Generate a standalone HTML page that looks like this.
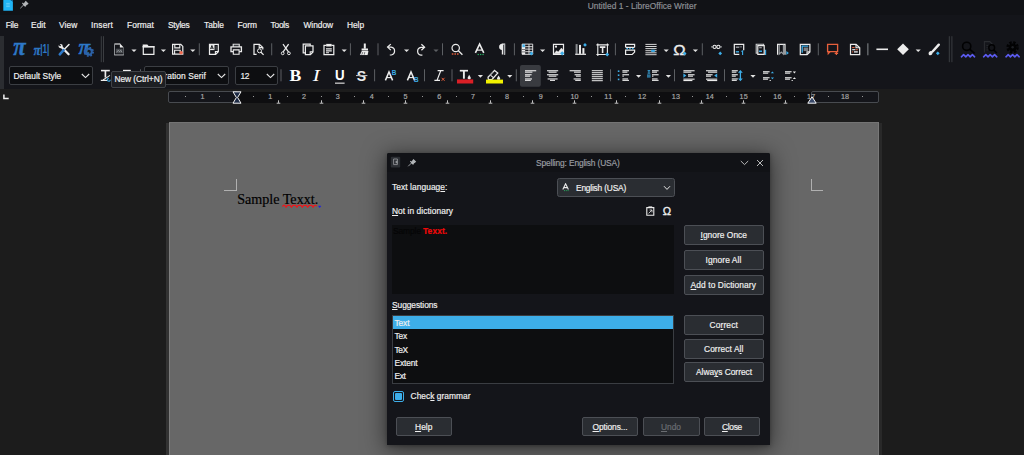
<!DOCTYPE html>
<html lang="en"><head><meta charset="utf-8"><title>Untitled 1 - LibreOffice Writer</title>
<style>
html,body{margin:0;padding:0;background:#1c1c1c;}
#root{position:relative;width:1024px;height:455px;overflow:hidden;background:#1c1c1c;font-family:"Liberation Sans",sans-serif;font-size:8.4px;color:#f2f2f2;}
.a{position:absolute;display:block;}
.t{position:absolute;white-space:pre;line-height:14px;height:14px;-webkit-text-stroke:0.18px currentColor;}
u{text-decoration:underline;text-decoration-thickness:1px;text-underline-offset:1px;}

</style></head>
<body>
<div id="root">
<div class="a" style="left:0px;top:0px;width:1024px;height:15px;background:#111216;"></div><div class="a" style="left:0px;top:15px;width:1024px;height:74px;background:#14151a;"></div><span class="t" style="left:587.70px;top:-1.41px;font-family:'Liberation Sans',sans-serif;font-size:8.4px;color:#8d9095;letter-spacing:0.036px;">Untitled 1 - LibreOffice Writer</span><svg class="a" style="left:0;top:0" width="32" height="12" viewBox="0 0 32 12"><path d="M3.3 0h7.2l2.4 1.6v9.2h-9.6z" fill="#1fb4f6"/><path d="M10.6 0l2.3 1.7v-1.7z" fill="#0e6fa8"/><path d="M6.2 3.4h3.6M6.2 5h3.6M6.2 6.6h3.6" stroke="#6fd0fa" stroke-width="0.8"/><path d="M20.6 8l3-3" stroke="#9a9da1" stroke-width="1" stroke-linecap="round"/><path d="M22.4 3l3.4 3.4M23.6 4.6l2.2-3l2 2l-3 2.2z" stroke="#b4b7ba" stroke-width="1.1" fill="#b4b7ba"/></svg><span class="t" style="left:5.80px;top:17.59px;font-family:'Liberation Sans',sans-serif;font-size:8.4px;color:#f0f0f0;letter-spacing:-0.325px;">File</span><span class="t" style="left:31.00px;top:17.59px;font-family:'Liberation Sans',sans-serif;font-size:8.4px;color:#f0f0f0;letter-spacing:0.041px;">Edit</span><span class="t" style="left:59.00px;top:17.59px;font-family:'Liberation Sans',sans-serif;font-size:8.4px;color:#f0f0f0;letter-spacing:0.121px;">View</span><span class="t" style="left:91.00px;top:17.59px;font-family:'Liberation Sans',sans-serif;font-size:8.4px;color:#f0f0f0;letter-spacing:0.174px;">Insert</span><span class="t" style="left:127.00px;top:17.59px;font-family:'Liberation Sans',sans-serif;font-size:8.4px;color:#f0f0f0;letter-spacing:0.078px;">Format</span><span class="t" style="left:168.00px;top:17.59px;font-family:'Liberation Sans',sans-serif;font-size:8.4px;color:#f0f0f0;letter-spacing:-0.219px;">Styles</span><span class="t" style="left:204.00px;top:17.59px;font-family:'Liberation Sans',sans-serif;font-size:8.4px;color:#f0f0f0;letter-spacing:-0.006px;">Table</span><span class="t" style="left:237.50px;top:17.59px;font-family:'Liberation Sans',sans-serif;font-size:8.4px;color:#f0f0f0;letter-spacing:-0.012px;">Form</span><span class="t" style="left:270.50px;top:17.59px;font-family:'Liberation Sans',sans-serif;font-size:8.4px;color:#f0f0f0;letter-spacing:-0.212px;">Tools</span><span class="t" style="left:303.50px;top:17.59px;font-family:'Liberation Sans',sans-serif;font-size:8.4px;color:#f0f0f0;letter-spacing:-0.049px;">Window</span><span class="t" style="left:347.00px;top:17.59px;font-family:'Liberation Sans',sans-serif;font-size:8.4px;color:#f0f0f0;letter-spacing:-0.059px;">Help</span><div class="a" style="left:0px;top:36.4px;width:3.6px;height:52.6px;background:#2b2d31;"></div><div class="a" style="left:8.7px;top:66.2px;width:84.6px;height:18.5px;background:#0d0e11;border:1px solid #3b3e43;box-sizing:border-box;border-radius:2px;"></div><span class="t" style="left:13.50px;top:68.59px;font-family:'Liberation Sans',sans-serif;font-size:8.4px;color:#f0f0f0;letter-spacing:0.024px;">Default Style</span><svg class="a" style="left:81.20px;top:73.05px;" width="9" height="6" viewBox="0 0 9 6"><path d="M0.8 1 L4.5 4.6 L8.2 1" fill="none" stroke="#e8e8e8" stroke-width="1.1"/></svg><div class="a" style="left:144px;top:66.2px;width:85px;height:18.5px;background:#0d0e11;border:1px solid #3b3e43;box-sizing:border-box;border-radius:2px;"></div><span class="t" style="left:148.00px;top:68.59px;font-family:'Liberation Sans',sans-serif;font-size:8.4px;color:#f0f0f0;letter-spacing:0.104px;">Liberation Serif</span><svg class="a" style="left:216.90px;top:73.05px;" width="9" height="6" viewBox="0 0 9 6"><path d="M0.8 1 L4.5 4.6 L8.2 1" fill="none" stroke="#e8e8e8" stroke-width="1.1"/></svg><div class="a" style="left:235.3px;top:66.2px;width:42.4px;height:18.5px;background:#0d0e11;border:1px solid #3b3e43;box-sizing:border-box;border-radius:2px;"></div><span class="t" style="left:240.50px;top:68.59px;font-family:'Liberation Sans',sans-serif;font-size:8.4px;color:#f0f0f0;letter-spacing:-0.414px;">12</span><svg class="a" style="left:265.60px;top:73.05px;" width="9" height="6" viewBox="0 0 9 6"><path d="M0.8 1 L4.5 4.6 L8.2 1" fill="none" stroke="#e8e8e8" stroke-width="1.1"/></svg><div class="a" style="left:0px;top:89px;width:1024px;height:366px;background:#1c1c1c;"></div><div class="a" style="left:165.6px;top:122.6px;width:3.4px;height:333px;background:#323232;"></div><div class="a" style="left:168.8px;top:122.2px;width:710.4px;height:333px;background:#676767;"></div><div class="a" style="left:168.8px;top:122.2px;width:1px;height:333px;background:#7e7e7e;"></div><div class="a" style="left:168.8px;top:122.2px;width:710.4px;height:1px;background:#747474;"></div><div class="a" style="left:878.2px;top:122.2px;width:1px;height:333px;background:#787878;"></div><div class="a" style="left:879.2px;top:122.8px;width:2.8px;height:333px;background:#292929;"></div><div class="a" style="left:224px;top:189.5px;width:13px;height:1px;background:#b0b0b0;"></div><div class="a" style="left:235.7px;top:179px;width:1px;height:11.5px;background:#b0b0b0;"></div><div class="a" style="left:810.5px;top:189.5px;width:12.5px;height:1px;background:#b0b0b0;"></div><div class="a" style="left:810.5px;top:179px;width:1px;height:11.5px;background:#b0b0b0;"></div><span class="t" style="left:237.20px;top:192.04px;font-family:'Liberation Serif',serif;font-size:14.1px;color:#000;letter-spacing:0.002px;">Sample Texxt.</span><svg class="a" style="left:282px;top:203.5px" width="42" height="6" viewBox="0 0 42 6"><path d="M0.4 2.6 l1 -1.2 l1.4 0 l1.3 1.9 l1.3 -1.9 l1.4 0 l1.4 0 l1.3 1.9 l1.3 -1.9 l1.4 0 l1.4 0 l1.3 1.9 l1.3 -1.9 l1.4 0 l1.4 0 l1.3 1.9 l1.3 -1.9 l1.4 0 l1.4 0 l1.3 1.9 l1.3 -1.9 l1.4 0 l1.4 0 l1.3 1.9 l1.3 -1.9 l1.4 0 l1 0.6" fill="none" stroke="#f0161a" stroke-width="1.15" stroke-linejoin="round"/><path d="M36.4 2 h2.6 l-1.3 1.7 z" fill="#2222e0" stroke="#2222e0" stroke-width="0.4"/></svg><div class="a" style="left:236px;top:91.5px;width:577px;height:11.4px;background:#0e0e10;"></div><div class="a" style="left:168px;top:91.4px;width:70px;height:11.5px;background:#14151a;border:1px solid #484b50;box-sizing:border-box;border-radius:2px;"></div><div class="a" style="left:811px;top:91.4px;width:67.6px;height:11.5px;background:#14151a;border:1px solid #484b50;box-sizing:border-box;border-radius:2px;"></div><div class="a" style="left:185px;top:95.5px;width:1px;height:1.6px;background:#9a9a9a;"></div><span class="t" style="left:200.59px;top:89.81px;font-family:'Liberation Sans',sans-serif;font-size:7.2px;color:#a8a8a8;letter-spacing:0.200px;">1</span><div class="a" style="left:219px;top:95.5px;width:1px;height:1.6px;background:#9a9a9a;"></div><div class="a" style="left:253px;top:95.5px;width:1px;height:1.6px;background:#9a9a9a;"></div><span class="t" style="left:268.21px;top:89.81px;font-family:'Liberation Sans',sans-serif;font-size:7.2px;color:#a8a8a8;letter-spacing:0.200px;">1</span><div class="a" style="left:287px;top:95.5px;width:1px;height:1.6px;background:#9a9a9a;"></div><span class="t" style="left:302.02px;top:89.81px;font-family:'Liberation Sans',sans-serif;font-size:7.2px;color:#a8a8a8;letter-spacing:0.200px;">2</span><div class="a" style="left:321px;top:95.5px;width:1px;height:1.6px;background:#9a9a9a;"></div><span class="t" style="left:335.84px;top:89.81px;font-family:'Liberation Sans',sans-serif;font-size:7.2px;color:#a8a8a8;letter-spacing:0.200px;">3</span><div class="a" style="left:354px;top:95.5px;width:1px;height:1.6px;background:#9a9a9a;"></div><span class="t" style="left:369.65px;top:89.81px;font-family:'Liberation Sans',sans-serif;font-size:7.2px;color:#a8a8a8;letter-spacing:0.200px;">4</span><div class="a" style="left:388px;top:95.5px;width:1px;height:1.6px;background:#9a9a9a;"></div><span class="t" style="left:403.46px;top:89.81px;font-family:'Liberation Sans',sans-serif;font-size:7.2px;color:#a8a8a8;letter-spacing:0.200px;">5</span><div class="a" style="left:422px;top:95.5px;width:1px;height:1.6px;background:#9a9a9a;"></div><span class="t" style="left:437.27px;top:89.81px;font-family:'Liberation Sans',sans-serif;font-size:7.2px;color:#a8a8a8;letter-spacing:0.200px;">6</span><div class="a" style="left:456px;top:95.5px;width:1px;height:1.6px;background:#9a9a9a;"></div><span class="t" style="left:471.08px;top:89.81px;font-family:'Liberation Sans',sans-serif;font-size:7.2px;color:#a8a8a8;letter-spacing:0.200px;">7</span><div class="a" style="left:490px;top:95.5px;width:1px;height:1.6px;background:#9a9a9a;"></div><span class="t" style="left:504.89px;top:89.81px;font-family:'Liberation Sans',sans-serif;font-size:7.2px;color:#a8a8a8;letter-spacing:0.200px;">8</span><div class="a" style="left:523px;top:95.5px;width:1px;height:1.6px;background:#9a9a9a;"></div><span class="t" style="left:538.71px;top:89.81px;font-family:'Liberation Sans',sans-serif;font-size:7.2px;color:#a8a8a8;letter-spacing:0.200px;">9</span><div class="a" style="left:557px;top:95.5px;width:1px;height:1.6px;background:#9a9a9a;"></div><span class="t" style="left:570.42px;top:89.81px;font-family:'Liberation Sans',sans-serif;font-size:7.2px;color:#a8a8a8;letter-spacing:0.200px;">10</span><div class="a" style="left:591px;top:95.5px;width:1px;height:1.6px;background:#9a9a9a;"></div><span class="t" style="left:604.23px;top:89.81px;font-family:'Liberation Sans',sans-serif;font-size:7.2px;color:#a8a8a8;letter-spacing:0.466px;">11</span><div class="a" style="left:625px;top:95.5px;width:1px;height:1.6px;background:#9a9a9a;"></div><span class="t" style="left:638.04px;top:89.81px;font-family:'Liberation Sans',sans-serif;font-size:7.2px;color:#a8a8a8;letter-spacing:0.200px;">12</span><div class="a" style="left:659px;top:95.5px;width:1px;height:1.6px;background:#9a9a9a;"></div><span class="t" style="left:671.85px;top:89.81px;font-family:'Liberation Sans',sans-serif;font-size:7.2px;color:#a8a8a8;letter-spacing:0.200px;">13</span><div class="a" style="left:692px;top:95.5px;width:1px;height:1.6px;background:#9a9a9a;"></div><span class="t" style="left:705.66px;top:89.81px;font-family:'Liberation Sans',sans-serif;font-size:7.2px;color:#a8a8a8;letter-spacing:0.200px;">14</span><div class="a" style="left:726px;top:95.5px;width:1px;height:1.6px;background:#9a9a9a;"></div><span class="t" style="left:739.48px;top:89.81px;font-family:'Liberation Sans',sans-serif;font-size:7.2px;color:#a8a8a8;letter-spacing:0.200px;">15</span><div class="a" style="left:760px;top:95.5px;width:1px;height:1.6px;background:#9a9a9a;"></div><span class="t" style="left:773.29px;top:89.81px;font-family:'Liberation Sans',sans-serif;font-size:7.2px;color:#a8a8a8;letter-spacing:0.200px;">16</span><div class="a" style="left:794px;top:95.5px;width:1px;height:1.6px;background:#9a9a9a;"></div><span class="t" style="left:807.10px;top:89.81px;font-family:'Liberation Sans',sans-serif;font-size:7.2px;color:#a8a8a8;letter-spacing:0.200px;">17</span><div class="a" style="left:828px;top:95.5px;width:1px;height:1.6px;background:#9a9a9a;"></div><span class="t" style="left:840.91px;top:89.81px;font-family:'Liberation Sans',sans-serif;font-size:7.2px;color:#a8a8a8;letter-spacing:0.200px;">18</span><div class="a" style="left:862px;top:95.5px;width:1px;height:1.6px;background:#9a9a9a;"></div><svg class="a" style="left:276.26px;top:99.6px" width="5" height="4" viewBox="0 0 5 4"><path d="M2.5 0.3v2.6M0.7 3.2h3.6" stroke="#c4c4c4" stroke-width="1" fill="none"/></svg><svg class="a" style="left:318.53px;top:99.6px" width="5" height="4" viewBox="0 0 5 4"><path d="M2.5 0.3v2.6M0.7 3.2h3.6" stroke="#c4c4c4" stroke-width="1" fill="none"/></svg><svg class="a" style="left:360.79px;top:99.6px" width="5" height="4" viewBox="0 0 5 4"><path d="M2.5 0.3v2.6M0.7 3.2h3.6" stroke="#c4c4c4" stroke-width="1" fill="none"/></svg><svg class="a" style="left:403.06px;top:99.6px" width="5" height="4" viewBox="0 0 5 4"><path d="M2.5 0.3v2.6M0.7 3.2h3.6" stroke="#c4c4c4" stroke-width="1" fill="none"/></svg><svg class="a" style="left:445.32px;top:99.6px" width="5" height="4" viewBox="0 0 5 4"><path d="M2.5 0.3v2.6M0.7 3.2h3.6" stroke="#c4c4c4" stroke-width="1" fill="none"/></svg><svg class="a" style="left:487.59px;top:99.6px" width="5" height="4" viewBox="0 0 5 4"><path d="M2.5 0.3v2.6M0.7 3.2h3.6" stroke="#c4c4c4" stroke-width="1" fill="none"/></svg><svg class="a" style="left:529.85px;top:99.6px" width="5" height="4" viewBox="0 0 5 4"><path d="M2.5 0.3v2.6M0.7 3.2h3.6" stroke="#c4c4c4" stroke-width="1" fill="none"/></svg><svg class="a" style="left:572.12px;top:99.6px" width="5" height="4" viewBox="0 0 5 4"><path d="M2.5 0.3v2.6M0.7 3.2h3.6" stroke="#c4c4c4" stroke-width="1" fill="none"/></svg><svg class="a" style="left:614.38px;top:99.6px" width="5" height="4" viewBox="0 0 5 4"><path d="M2.5 0.3v2.6M0.7 3.2h3.6" stroke="#c4c4c4" stroke-width="1" fill="none"/></svg><svg class="a" style="left:656.65px;top:99.6px" width="5" height="4" viewBox="0 0 5 4"><path d="M2.5 0.3v2.6M0.7 3.2h3.6" stroke="#c4c4c4" stroke-width="1" fill="none"/></svg><svg class="a" style="left:698.91px;top:99.6px" width="5" height="4" viewBox="0 0 5 4"><path d="M2.5 0.3v2.6M0.7 3.2h3.6" stroke="#c4c4c4" stroke-width="1" fill="none"/></svg><svg class="a" style="left:741.18px;top:99.6px" width="5" height="4" viewBox="0 0 5 4"><path d="M2.5 0.3v2.6M0.7 3.2h3.6" stroke="#c4c4c4" stroke-width="1" fill="none"/></svg><svg class="a" style="left:783.44px;top:99.6px" width="5" height="4" viewBox="0 0 5 4"><path d="M2.5 0.3v2.6M0.7 3.2h3.6" stroke="#c4c4c4" stroke-width="1" fill="none"/></svg><svg class="a" style="left:231.50px;top:91px" width="10" height="13" viewBox="0 0 10 13"><path d="M1 0.8h8L5.6 6.5 9 12.2H1L4.4 6.5z" fill="#1d2a44" stroke="#f4f4f4" stroke-width="1" stroke-linejoin="round"/></svg><svg class="a" style="left:807.00px;top:96px" width="10" height="8" viewBox="0 0 10 8"><path d="M5 0.8 L9.2 7.2H0.8z" fill="#3a4a6a" stroke="#f4f4f4" stroke-width="1" stroke-linejoin="round"/></svg><svg class="a" style="left:3px;top:94px" width="7" height="6" viewBox="0 0 7 6"><path d="M0.9 0.4v4h4.8" stroke="#f0f0f0" stroke-width="1.5" fill="none"/></svg><svg class="a" style="left:0;top:0" width="1024" height="90" viewBox="0 0 1024 90"><text x="13.2" y="55.4" font-family="'Liberation Serif', serif" font-weight="bold" font-style="italic" font-size="24.5" fill="#2d78c8" stroke="#2d78c8" stroke-width="0.45" textLength="12.4" lengthAdjust="spacingAndGlyphs">π</text><text x="33.8" y="54.8" font-family="'Liberation Serif', serif" font-weight="bold" font-style="italic" font-size="15" fill="#2d78c8" stroke="#2d78c8" stroke-width="0.4" textLength="6.6" lengthAdjust="spacingAndGlyphs">π</text><text x="40.2" y="53.2" font-family="'Liberation Sans', sans-serif" font-weight="bold" font-size="12.6" fill="#2d78c8" textLength="9.2" lengthAdjust="spacingAndGlyphs">|1|</text><g transform="translate(58 43.5)" ><path d="M3 3L10.6 10.8" stroke="#ececec" stroke-width="2.24" fill="none" stroke-linecap="round"/><circle cx="2.6" cy="2.6" r="2.1" fill="#ececec" stroke="none" stroke-width="1"/><path d="M0 0L2.6 2.6" stroke="#14151a" stroke-width="1.46" fill="none" /><path d="M11 1L6.6 5.6" stroke="#ececec" stroke-width="1.46" fill="none" stroke-linecap="round"/><path d="M5.6 6.6L1.8 10.8" stroke="#2d78c8" stroke-width="2.58" fill="none" stroke-linecap="round"/></g><text x="78.4" y="53.8" font-family="'Liberation Serif', serif" font-weight="bold" font-style="italic" font-size="22" fill="#2d78c8" stroke="#2d78c8" stroke-width="0.45" textLength="11.6" lengthAdjust="spacingAndGlyphs">π</text><g transform="translate(84.2 47.2)" ><circle cx="4.6" cy="4.6" r="3.0" fill="none" stroke="#2c62a8" stroke-width="2.0"/><circle cx="4.6" cy="4.6" r="4.3" fill="none" stroke="#2c62a8" stroke-width="1.8" stroke-dasharray="1.7 1.68"/></g><rect x="100.8" y="36.2" width="1" height="26" fill="#3b3d41"/><rect x="103" y="36.2" width="1" height="26" fill="#3b3d41"/><g transform="translate(113.6 43.5)" ><path d="M0.8 0.5h5.8" stroke="#ececec" stroke-width="1.12" fill="none" /><path d="M6.3 0.1l3.9 3.9h-3.9z" fill="#ececec"/><path d="M0.9 0.6v10.8" stroke="#8c8f93" stroke-width="1.01" fill="none" /><path d="M9.8 4v7.4" stroke="#6c6f73" stroke-width="0.9" fill="none" /><rect x="2.2" y="5.2" width="6.8" height="4.6" fill="#4a4d51" /><path d="M3 8.8l1.6-2l1.4 1.4l1.2-1.4l1.2 2" stroke="#a0a3a7" stroke-width="0.78" fill="none" /><rect x="0.6" y="11" width="9.6" height="0.9" fill="#c4c6c8" /></g><path d="M131.40 49.40h5.2L134 52.10z" fill="#e2e2e2"/><g transform="translate(142.6 43.5)" ><path d="M0.7 3h10.6v7.8h-10.6z" stroke="#ececec" stroke-width="1.23" fill="none" /><path d="M0.1 1h4.6l1.3 1.6v0.6h-5.9z" fill="#ececec"/><rect x="0.1" y="2.6" width="11.8" height="1.5" fill="#ececec" /></g><path d="M160.80 49.40h5.2L163.4 52.10z" fill="#e2e2e2"/><g transform="translate(171.8 43.5)" ><path d="M0.8 0.9h8.2l2 2v7.8h-10.2z" stroke="#ececec" stroke-width="1.23" fill="none" /><path d="M3 1v3.4h5v-3.4" stroke="#ececec" stroke-width="1.12" fill="none" /><path d="M2.8 10.6v-3.8h5.6v1.6" stroke="#ececec" stroke-width="1.12" fill="none" /><circle cx="9.3" cy="9.2" r="1.8" fill="#ee6a50" stroke="none" stroke-width="1"/></g><path d="M190.20 49.40h5.2L192.8 52.10z" fill="#e2e2e2"/><rect x="198.8" y="43.3" width="1" height="12.0" fill="#5c5f63"/><g transform="translate(208.8 43.5)" ><path d="M0.7 0.8h8.8v7.4l-2.6 2.6h-6.2z" stroke="#ececec" stroke-width="1.23" fill="none" /><path d="M9.4 8h-2.8v2.8" stroke="#ececec" stroke-width="1.12" fill="none" /><rect x="0.5" y="0.6" width="5.2" height="6" fill="#ececec" /><path d="M1.7 5.6l1.4-3.6l1.4 3.6M2.2 4.6h1.8" stroke="#14161a" stroke-width="0.9" fill="none" /><rect x="6.6" y="2.4" width="1.8" height="4" fill="#3c3f43" /></g><g transform="translate(230.2 43.5)" ><path d="M3 3.2v-2.4h6v2.4" stroke="#ececec" stroke-width="1.12" fill="none" /><path d="M3 8.2h-2.2v-4.8h10.4v4.8h-2.2" stroke="#ececec" stroke-width="1.34" fill="none" /><path d="M3.1 6.4h5.8v4.4h-5.8z" stroke="#ececec" stroke-width="1.12" fill="none" /><rect x="3.4" y="1" width="5.2" height="0.8" fill="#9a9da1" /></g><g transform="translate(253.2 43.5)" ><path d="M3.4 10.8h-2.6v-10h5.4l3.4 3.2v2" stroke="#ececec" stroke-width="1.23" fill="none" /><path d="M6 0.9v3.2h3.4" stroke="#ececec" stroke-width="1.12" fill="none" /><circle cx="6.3" cy="7.3" r="2" fill="none" stroke="#ececec" stroke-width="1"/><path d="M7.8 8.8l2.6 2.6" stroke="#ececec" stroke-width="1.23" fill="none" /></g><rect x="271.2" y="43.3" width="1" height="12.0" fill="#5c5f63"/><g transform="translate(280.8 43.5)" ><path d="M2.2 0.6l5.6 8" stroke="#ececec" stroke-width="1.23" fill="none" /><path d="M7.8 0.6l-5.6 8" stroke="#ececec" stroke-width="1.23" fill="none" /><circle cx="1.9" cy="9.8" r="1.4" fill="none" stroke="#ececec" stroke-width="1"/><circle cx="8.1" cy="9.8" r="1.4" fill="none" stroke="#ececec" stroke-width="1"/></g><g transform="translate(302.6 43.5)" ><path d="M2.6 9.4h-2v-8.8h7v1.6" stroke="#ececec" stroke-width="1.23" fill="none" /><path d="M2.8 2.4h7.6v6l-2.6 2.8h-5z" stroke="#ececec" stroke-width="1.23" fill="none" /><path d="M10.4 8.2h-2.8v3" stroke="#ececec" stroke-width="1.12" fill="none" /></g><g transform="translate(323.2 43.5)" ><path d="M3.2 1.8h-2.4v9.4h9.8v-9.4h-2.4" stroke="#ececec" stroke-width="1.23" fill="none" /><rect x="3" y="0.4" width="5.4" height="2.6" fill="#ececec" /><path d="M2.8 5.4h5.8M2.8 7.4h5.8M2.8 9.3h3" stroke="#ececec" stroke-width="1.12" fill="none" /></g><path d="M341.60 49.40h5.2L344.2 52.10z" fill="#e2e2e2"/><rect x="349.9" y="43.3" width="1" height="12.0" fill="#5c5f63"/><g transform="translate(359.8 43.5)" ><rect x="4" y="0" width="2" height="5.2" fill="#ececec" /><rect x="1.8" y="5" width="6.4" height="2" fill="#ececec" /><path d="M2 7.4l-1.8 4.2h7.6l0.8-4.2z" stroke="#ececec" stroke-width="0.11" fill="#ececec" /><path d="M3 8.6l-1 2.6M5 8.6l-0.6 2.6" stroke="#14161a" stroke-width="0.56" fill="none" /></g><rect x="377.5" y="43.3" width="1" height="12.0" fill="#5c5f63"/><g transform="translate(386.4 43.5)" ><path d="M1.4 3.6h3.4a4 4 0 0 1 0 7.9h-1.4" stroke="#ececec" stroke-width="1.23" fill="none" /><path d="M4.4 0.6l-3.2 3l3.2 3" stroke="#ececec" stroke-width="1.23" fill="none" /></g><path d="M404.00 49.40h5.2L406.6 52.10z" fill="#e2e2e2"/><g transform="translate(415.6 43.5)" ><path d="M8.8 3.8h-3.4a4 4 0 0 0 0 7.9h1.4" stroke="#ececec" stroke-width="1.23" fill="none" /><path d="M5.8 0.8l3.2 3l-3.2 3" stroke="#ececec" stroke-width="1.23" fill="none" /></g><path d="M433.40 49.40h5.2L436 52.10z" fill="#5c5f63"/><rect x="442.0" y="43.3" width="1" height="12.0" fill="#5c5f63"/><g transform="translate(450.8 43.5)" ><circle cx="4.9" cy="4.5" r="3.7" fill="none" stroke="#ececec" stroke-width="1.2"/><path d="M7.6 7.2l4 4" stroke="#ececec" stroke-width="1.34" fill="none" /><rect x="1" y="9.8" width="1.6" height="1.4" fill="#e8603c" /><rect x="3.6" y="9.8" width="1.6" height="1.4" fill="#e8603c" /><rect x="6.2" y="9.8" width="1.6" height="1.4" fill="#e8603c" /></g><g transform="translate(474.6 43.5)" ><path d="M0.8 9.4l4.2-8.8l4.2 8.8" stroke="#ececec" stroke-width="1.57" fill="none" /><path d="M2.4 6.6h5.4" stroke="#ececec" stroke-width="1.23" fill="none" /><rect x="3" y="10.4" width="1.3" height="1.2" fill="#27ae60" /><rect x="5.4" y="10.4" width="1.3" height="1.2" fill="#27ae60" /><rect x="7.8" y="10.4" width="1.3" height="1.2" fill="#27ae60" /></g><g transform="translate(497.6 43.5)" ><path d="M4.2 0.6h2.8v10.6" stroke="#ececec" stroke-width="1.23" fill="none" /><path d="M4.6 0.6a2.8 2.8 0 0 0 0 5.6z" stroke="#ececec" stroke-width="0.67" fill="#ececec" /><rect x="4.2" y="0.6" width="1.4" height="10.4" fill="#ececec" /><rect x="6.2" y="0.6" width="1" height="10.6" fill="#9a9da1" /></g><rect x="513.9" y="43.3" width="1" height="12.0" fill="#5c5f63"/><g transform="translate(521.6 43.5)" ><path d="M0.5 0.6h10.6v10.2h-10.6zM3.6 3.2h7.6M3.6 5.6h7.6M3.6 8.2h7.6M7.4 0.6v10.2" stroke="#ececec" stroke-width="0.9" fill="none" /><rect x="0.4" y="0.6" width="3.2" height="10.2" fill="#ececec" /><rect x="0.8" y="0.9" width="2.4" height="2.8" fill="#3daee9" /><path d="M0.4 6h3.2M0.4 8.4h3.2" stroke="#14151a" stroke-width="0.56" fill="none" /><path d="M9.8 8.00L11.80 10L9.8 12.00L7.80 10z" fill="#3daee9"/></g><path d="M540.00 49.40h5.2L542.6 52.10z" fill="#e2e2e2"/><g transform="translate(552.8 43.5)" ><path d="M0.7 0.8h10v10h-10z" stroke="#ececec" stroke-width="1.23" fill="none" /><path d="M1.2 10.2l2.6-3l1.6 1.4l3.2-4l1.6 1.6v4z" stroke="#ececec" stroke-width="0.45" fill="#ececec" /><circle cx="3.2" cy="3.2" r="1.1" fill="#ececec" stroke="none" stroke-width="1"/><path d="M9.4 7.68L11.53 9.8L9.4 11.93L7.28 9.8z" fill="#3daee9"/></g><g transform="translate(574.8 43.5)" ><rect x="0.8" y="0.6" width="2" height="9.8" fill="#8a8d91" /><rect x="4.2" y="1.4" width="2" height="9" fill="#ececec" /><rect x="7.6" y="4.6" width="2" height="5.8" fill="#ececec" /><rect x="0.4" y="10.2" width="10.8" height="1.2" fill="#ececec" /><path d="M10.2 -0.48L12.07 1.4L10.2 3.27L8.32 1.4z" fill="#3daee9"/></g><g transform="translate(596.2 43.5)" ><path d="M1.6 1.4h9.6v9.6h-9.6z" stroke="#ececec" stroke-width="1.12" fill="none" /><path d="M0.2 1.4h1.6M11 1.4h1.6M1.6 0v1.6M11.2 0v1.6M0.2 11h1.6M1.6 11v1.4" stroke="#ececec" stroke-width="1.12" fill="none" /><path d="M3.6 3.6h5.6M6.4 3.6v5.8" stroke="#ececec" stroke-width="1.57" fill="none" /><path d="M11 9.00L13.00 11L11 13.00L9.00 11z" fill="#3daee9"/></g><rect x="614.9" y="43.3" width="1" height="12.0" fill="#5c5f63"/><g transform="translate(624.8 43.5)" ><path d="M0.8 3.8v-3h9v3M0.8 3.9h9" stroke="#ececec" stroke-width="1.23" fill="none" /><path d="M0.8 6.6h9v2l-2.4 2.4h-6.6z" stroke="#ececec" stroke-width="1.23" fill="none" /><path d="M1.6 5.2h1.6M4.4 5.2h1.6M7.2 5.2h1.6" stroke="#3daee9" stroke-width="1.23" fill="none" /></g><g transform="translate(645.4 43.5)" ><path d="M0 0.9h11.2M0 3h11.2M0 5.1h11.2M0 7.2h11.2M0 9.3h11.2M0 11.2h11.2" stroke="#ececec" stroke-width="0.9" fill="none" /><rect x="5.8" y="6.2" width="3.6" height="2.2" fill="#3daee9" /></g><path d="M663.60 49.40h5.2L666.2 52.10z" fill="#e2e2e2"/><text x="673.2" y="54.9" font-family="'Liberation Sans', sans-serif" font-size="15.4" fill="#ececec" stroke="#ececec" stroke-width="0.35" textLength="12.4" lengthAdjust="spacingAndGlyphs">Ω</text><path d="M684.6 51.6l1.9 1.9l-1.9 1.9l-1.9-1.9z" fill="#3daee9"/><path d="M692.80 49.40h5.2L695.4 52.10z" fill="#e2e2e2"/><rect x="701.8" y="43.3" width="1" height="12.0" fill="#5c5f63"/><g transform="translate(710.6 43.5)" ><circle cx="4.0" cy="3.4" r="1.6" fill="none" stroke="#ececec" stroke-width="1.1"/><circle cx="7.8" cy="3.4" r="1.6" fill="none" stroke="#ececec" stroke-width="1.1"/><path d="M0.6 3.4h1.6M9.6 3.4h1.6" stroke="#b0b3b6" stroke-width="1.12" fill="none" /><path d="M9.6 8.03L11.47 9.9L9.6 11.78L7.72 9.9z" fill="#3daee9"/></g><g transform="translate(733.6 43.5)" ><path d="M0.7 11v-10.2h9.4v6" stroke="#ececec" stroke-width="1.23" fill="none" /><path d="M0.7 10.9h5" stroke="#ececec" stroke-width="1.23" fill="none" /><rect x="2.2" y="3" width="3.4" height="1.4" fill="#9a9da1" /><rect x="6" y="3" width="2.4" height="0.8" fill="#9a9da1" /><rect x="2.2" y="7.6" width="3.2" height="1.4" fill="#3daee9" /><path d="M7.8 8l1.2-0.6v4.2" stroke="#3daee9" stroke-width="1.12" fill="none" /></g><g transform="translate(755.4 43.5)" ><path d="M2.2 9.6h-1.4v-8.8h7.4v1" stroke="#c8cacc" stroke-width="1.12" fill="none" /><path d="M2.4 2.2h6.4v8.6h-6.4z" stroke="#ececec" stroke-width="1.18" fill="none" /><rect x="3.8" y="3.6" width="2.6" height="1.2" fill="#9a9da1" /><rect x="3.6" y="7" width="3" height="1.5" fill="#3daee9" /><path d="M10.2 6.2v5.2" stroke="#3daee9" stroke-width="1.12" fill="none" /></g><g transform="translate(776.8 43.5)" ><path d="M0.8 11.2v-10.4h7.4v10.4" stroke="#ececec" stroke-width="1.23" fill="none" /><path d="M2.4 1.2v9.4l2.1-2l2.1 2v-9.4" stroke="#9a9da1" stroke-width="1.12" fill="none" /><path d="M9.6 7.6l2.4 2l-2.4 2z" fill="#3daee9"/></g><g transform="translate(799.6 43.5)" ><path d="M0.7 0.8h9.6v7.6l-2.8 2.8h-6.8z" stroke="#ececec" stroke-width="1.23" fill="none" /><path d="M10.2 8.4h-2.8v2.8" stroke="#ececec" stroke-width="1.12" fill="none" /><path d="M2.6 9.2v-6.6h6" stroke="#3daee9" stroke-width="1.34" fill="none" /><rect x="4" y="4" width="4.6" height="3.6" fill="#7d8084" /></g><rect x="817.8" y="43.3" width="1" height="12.0" fill="#5c5f63"/><g transform="translate(826.8 43.5)" ><path d="M0.8 0.9h10v7.2h-10z" stroke="#e8603c" stroke-width="1.34" fill="none" /><path d="M1.4 8.2v2.2l1.8-2" stroke="#e8603c" stroke-width="1.12" fill="none" /><path d="M9.6 8.2v3.4M7.9 9.9h3.4" stroke="#e8603c" stroke-width="1.23" fill="none" /></g><g transform="translate(849.8 43.5)" ><path d="M0.7 0.8h5.6l3.6 3.4v7h-9.2z" stroke="#ececec" stroke-width="1.23" fill="none" /><path d="M6.2 0.9v3.4h3.6" stroke="#ececec" stroke-width="1.12" fill="none" /><path d="M2.4 4h2.4" stroke="#e8603c" stroke-width="1.12" fill="none" /><path d="M2.4 6.2h3.2" stroke="#ececec" stroke-width="1.12" fill="none" /><path d="M6 6.2h2" stroke="#e8603c" stroke-width="1.12" fill="none" /><path d="M2.4 8.4h1" stroke="#e8603c" stroke-width="1.12" fill="none" /><path d="M4.2 8.4h3.8" stroke="#ececec" stroke-width="1.34" fill="none" /></g><rect x="867.0" y="43.3" width="1.6" height="12.0" fill="#5c5f63"/><rect x="876.4" y="48.5" width="11.6" height="1.6" fill="#ececec"/><path d="M903 43.5l5.8 5.7l-5.8 5.7l-5.8-5.7z" fill="#ececec"/><path d="M915.60 49.40h5.2L918.2 52.10z" fill="#e2e2e2"/><g transform="translate(928.2 43.5)" ><path d="M10.6 1.2L4.4 8" stroke="#ececec" stroke-width="2.46" fill="none" stroke-linecap="round"/><path d="M3.6 8.4a1.8 1.8 0 0 1-2.4 2.4a1.8 1.8 0 0 1 2.4-2.4z" stroke="#ececec" stroke-width="1.34" fill="#ececec" /><path d="M9.6 7.93L11.47 9.8L9.6 11.68L7.72 9.8z" fill="#3daee9"/></g><rect x="948.8" y="36.2" width="1" height="26" fill="#3b3d41"/><rect x="951.4" y="36.2" width="1" height="26" fill="#3b3d41"/><circle cx="966.7" cy="46.3" r="4.1" fill="none" stroke="#020203" stroke-width="1.6"/><path d="M969.8 49.4l4.8 4" stroke="#020203" stroke-width="1.8"/><path d="M961.4 56.8l2.2-2.1l2.2 2.1l2.2-2.1l2.2 2.1l2.2-2.1l2.2 2.1" fill="none" stroke="#5b5bf0" stroke-width="1.6" stroke-linejoin="round" stroke-linecap="round"/><path d="M984.4 52.6v-11h5.4l3 3" fill="none" stroke="#2a2c30" stroke-width="1.1"/><circle cx="991.7" cy="47.7" r="2.9" fill="none" stroke="#020203" stroke-width="1.4"/><path d="M993.8 50l3 3" stroke="#020203" stroke-width="1.6"/><path d="M986.4 45.6h1.8M986.4 47.8h1.4M986.4 50h1.8" stroke="#2a2c30" stroke-width="0.9"/><path d="M983.6 56.8l2.2-2.1l2.2 2.1l2.2-2.1l2.2 2.1l2.2-2.1l2.2 2.1" fill="none" stroke="#5b5bf0" stroke-width="1.6" stroke-linejoin="round" stroke-linecap="round"/><circle cx="1012.6" cy="47.3" r="3.9" fill="#020203"/><circle cx="1012.6" cy="47.3" r="5" fill="none" stroke="#020203" stroke-width="2.4" stroke-dasharray="2.4 1.527"/><circle cx="1012.6" cy="47.3" r="1.2" fill="#1d1f24"/><path d="M1006.0 56.8l2.2-2.1l2.2 2.1l2.2-2.1l2.2 2.1l2.2-2.1l2.2 2.1" fill="none" stroke="#5b5bf0" stroke-width="1.6" stroke-linejoin="round" stroke-linecap="round"/><g transform="translate(100.4 69.8)" ><path d="M0.6 0.8h8.8" stroke="#ececec" stroke-width="1.57" fill="none" /><path d="M5 0.8v7" stroke="#ececec" stroke-width="1.68" fill="none" /><path d="M0.4 10.6h6.2" stroke="#ececec" stroke-width="1.23" fill="none" /><path d="M2.6 10.2l7-4.6" stroke="#ececec" stroke-width="1.01" fill="none" /><path d="M8.4 8.6a1.4 1.4 0 1 0 1.4 1.4" stroke="#3daee9" stroke-width="1.12" fill="none" /></g><rect x="123" y="69.8" width="7.8" height="1.2" fill="#ececec"/><rect x="140.0" y="69.3" width="1" height="12.0" fill="#5c5f63"/><rect x="280.5" y="69.3" width="1" height="12.0" fill="#5c5f63"/><text x="289.4" y="80.8" font-family="'Liberation Serif', serif" font-weight="bold" font-size="16.8" fill="#fff" textLength="11.8" lengthAdjust="spacingAndGlyphs">B</text><text x="312.8" y="80.9" font-family="'Liberation Serif', serif" font-style="italic" font-size="17" fill="#fff" textLength="7" lengthAdjust="spacingAndGlyphs">I</text><text x="335" y="79.6" font-family="'Liberation Sans', sans-serif" font-weight="bold" font-size="13.8" fill="#fff" textLength="9.6" lengthAdjust="spacingAndGlyphs">U</text><rect x="335" y="82.6" width="9.6" height="1.1" fill="#ececec"/><text x="356.8" y="80.8" font-family="'Liberation Sans', sans-serif" font-weight="bold" font-size="15" fill="#ececec" textLength="9.4" lengthAdjust="spacingAndGlyphs">S</text><rect x="356" y="75" width="11.4" height="1.1" fill="#b8babd"/><rect x="374.1" y="69.3" width="1" height="12.0" fill="#5c5f63"/><g transform="translate(384.8 69.8)" ><path d="M0.6000000000000001 10.6l3.6-8.4l3.6 8.4" stroke="#ececec" stroke-width="1.51" fill="none" /><path d="M2.1 7.8h4.2" stroke="#ececec" stroke-width="1.12" fill="none" /></g><text x="391.8" y="74.6" font-family="'Liberation Sans', sans-serif" font-weight="bold" font-size="6.4" fill="#3daee9">B</text><g transform="translate(406.8 69.8)" ><path d="M0.6000000000000001 10.6l3.6-8.4l3.6 8.4" stroke="#ececec" stroke-width="1.51" fill="none" /><path d="M2.1 7.8h4.2" stroke="#ececec" stroke-width="1.12" fill="none" /></g><text x="414" y="82.4" font-family="'Liberation Sans', sans-serif" font-weight="bold" font-size="6.4" fill="#3daee9">B</text><rect x="424.0" y="69.3" width="1" height="12.0" fill="#5c5f63"/><g transform="translate(434.2 69.8)" ><path d="M3.4 0.8h6M0.2 10.6h5.6M6.6 0.8l-3.8 9.8" stroke="#ececec" stroke-width="1.23" fill="none" /><path d="M7.4 8l3 3M10.4 8l-3 3" stroke="#e8603c" stroke-width="0.95" fill="none" /></g><rect x="451.5" y="69.3" width="1" height="12.0" fill="#5c5f63"/><g transform="translate(459.4 69.8)" ><path d="M0.4 0.9h8.2" stroke="#ececec" stroke-width="1.68" fill="none" /><path d="M4.5 0.9v8" stroke="#ececec" stroke-width="1.9" fill="none" /><path d="M9.8 5l1.5 2.6a1.6 1.6 0 1 1-3 0z" fill="#ececec"/></g><rect x="457" y="79.4" width="16.2" height="4.1" fill="#da1f26"/><path d="M477.80 75.10h5.2L480.4 77.80z" fill="#e2e2e2"/><g transform="translate(487 69.8)" ><path d="M7.6 0.6l3.2 2.6l-6 6.6h-3.4l-0.4-2.4z" stroke="#ececec" stroke-width="1.23" fill="none" /><path d="M3.4 5.4l3.6 3" stroke="#ececec" stroke-width="1.01" fill="none" /><path d="M6 2.4l-3 3.4" stroke="#808388" stroke-width="0.9" fill="none" /><path d="M11.6 5.6l1.4 2.4a1.5 1.5 0 1 1-2.8 0z" fill="#ececec"/></g><rect x="486" y="79.6" width="17" height="3.9" fill="#f1f100"/><path d="M507.20 75.10h5.2L509.8 77.80z" fill="#e2e2e2"/><rect x="515.8" y="69.3" width="1" height="12.0" fill="#5c5f63"/><rect x="520" y="65" width="20.8" height="21.8" rx="2" fill="#393b40"/><rect x="525" y="70.2" width="11.2" height="1.1" fill="#ececec"/><rect x="525" y="71.60000000000001" width="7.4" height="1.1" fill="#ececec"/><rect x="525" y="74.2" width="6.6" height="1.1" fill="#ececec"/><rect x="525" y="75.60000000000001" width="5" height="1.1" fill="#ececec"/><rect x="525" y="78.4" width="7" height="1.1" fill="#ececec"/><rect x="525" y="79.8" width="5.8" height="1.1" fill="#ececec"/><rect x="547" y="70.2" width="11.2" height="1.1" fill="#ececec"/><rect x="548.6" y="71.60000000000001" width="8" height="1.1" fill="#ececec"/><rect x="547" y="74.2" width="11.2" height="1.1" fill="#ececec"/><rect x="548.8" y="75.60000000000001" width="7.6" height="1.1" fill="#ececec"/><rect x="547.6" y="78.4" width="10" height="1.1" fill="#ececec"/><rect x="550" y="79.8" width="5" height="1.1" fill="#ececec"/><rect x="569.6" y="70.2" width="11.2" height="1.1" fill="#ececec"/><rect x="574.0" y="71.60000000000001" width="6.8" height="1.1" fill="#ececec"/><rect x="574.6" y="74.2" width="6.2" height="1.1" fill="#ececec"/><rect x="576.0" y="75.60000000000001" width="4.8" height="1.1" fill="#ececec"/><rect x="573.6" y="78.4" width="7.2" height="1.1" fill="#ececec"/><rect x="575.2" y="79.8" width="5.6" height="1.1" fill="#ececec"/><rect x="591.8" y="70.2" width="11" height="1" fill="#ececec"/><rect x="591.8" y="72.2" width="11" height="1" fill="#ececec"/><rect x="591.8" y="74.2" width="11" height="1" fill="#ececec"/><rect x="591.8" y="76.2" width="11" height="1" fill="#ececec"/><rect x="591.8" y="78.2" width="11" height="1" fill="#ececec"/><rect x="591.8" y="80.2" width="11" height="1" fill="#ececec"/><rect x="610.0" y="69.3" width="1" height="12.0" fill="#5c5f63"/><rect x="617.8" y="70.4" width="1.6" height="1.6" fill="#3daee9"/><rect x="617.8" y="74.4" width="1.6" height="1.6" fill="#3daee9"/><rect x="617.8" y="78.60000000000001" width="1.6" height="1.6" fill="#3daee9"/><rect x="622.4" y="70.2" width="6.6" height="1.1" fill="#ececec"/><rect x="622.4" y="71.60000000000001" width="5" height="1.1" fill="#ececec"/><rect x="622.4" y="74.2" width="6.6" height="1.1" fill="#ececec"/><rect x="622.4" y="75.60000000000001" width="1.4" height="1.1" fill="#ececec"/><rect x="622.4" y="78.4" width="5.6" height="1.1" fill="#ececec"/><rect x="622.4" y="79.8" width="6.6" height="1.1" fill="#ececec"/><path d="M636.00 75.10h5.2L638.6 77.80z" fill="#e2e2e2"/><rect x="647.6" y="70.2" width="2.6" height="1" fill="#3daee9"/><rect x="648.2" y="71.4" width="1.4" height="1" fill="#3daee9"/><rect x="647.6" y="72.60000000000001" width="2.6" height="1" fill="#3daee9"/><rect x="647" y="74.60000000000001" width="3.6" height="1" fill="#3daee9"/><rect x="647" y="76.4" width="3.6" height="1" fill="#3daee9"/><rect x="652" y="70.2" width="6.6" height="1.1" fill="#ececec"/><rect x="652" y="71.60000000000001" width="5" height="1.1" fill="#ececec"/><rect x="652" y="74.2" width="6.6" height="1.1" fill="#ececec"/><rect x="652" y="75.60000000000001" width="1.4" height="1.1" fill="#ececec"/><rect x="652" y="78.4" width="5.6" height="1.1" fill="#ececec"/><rect x="652" y="79.8" width="6.6" height="1.1" fill="#ececec"/><path d="M665.80 75.10h5.2L668.4 77.80z" fill="#e2e2e2"/><rect x="674.0" y="69.3" width="1" height="12.0" fill="#5c5f63"/><rect x="683.4" y="70.2" width="11.2" height="1.1" fill="#ececec"/><rect x="683.4" y="71.60000000000001" width="8" height="1.1" fill="#ececec"/><rect x="688.0" y="74.2" width="6.6" height="1.1" fill="#ececec"/><rect x="688.0" y="75.60000000000001" width="5" height="1.1" fill="#ececec"/><rect x="683.4" y="78.60000000000001" width="11.2" height="1.1" fill="#ececec"/><rect x="683.4" y="80.0" width="9" height="1.1" fill="#ececec"/><path d="M683.4 73.4l3 2.2l-3 2.2z" fill="#3daee9"/><rect x="706" y="70.2" width="11.2" height="1.1" fill="#ececec"/><rect x="708" y="71.60000000000001" width="9.2" height="1.1" fill="#ececec"/><rect x="706" y="74.2" width="6.6" height="1.1" fill="#ececec"/><rect x="706" y="75.60000000000001" width="5" height="1.1" fill="#ececec"/><rect x="706" y="78.60000000000001" width="11.2" height="1.1" fill="#ececec"/><rect x="707.2" y="80.0" width="10" height="1.1" fill="#ececec"/><path d="M717.2 73.4l-3 2.2l3 2.2z" fill="#3daee9"/><rect x="724.0" y="69.3" width="1" height="12.0" fill="#5c5f63"/><rect x="731.8" y="70.2" width="6" height="1.1" fill="#ececec"/><rect x="731.8" y="71.60000000000001" width="4.6" height="1.1" fill="#ececec"/><rect x="731.8" y="74.2" width="6" height="1.1" fill="#ececec"/><rect x="731.8" y="75.60000000000001" width="4" height="1.1" fill="#ececec"/><rect x="731.8" y="78.4" width="6" height="1.1" fill="#ececec"/><rect x="731.8" y="79.8" width="5" height="1.1" fill="#ececec"/><path d="M740.4 71.6v8" stroke="#3daee9" stroke-width="1.3"/><path d="M738 72.8l2.4-2.8l2.4 2.8zM738 78.4l2.4 2.8l2.4-2.8z" fill="#3daee9"/><path d="M750.40 75.10h5.2L753 77.80z" fill="#e2e2e2"/><rect x="763" y="71.2" width="6.6" height="1.1" fill="#ececec"/><rect x="763" y="72.60000000000001" width="5.2" height="1.1" fill="#ececec"/><rect x="763" y="77.2" width="6.6" height="1.1" fill="#ececec"/><rect x="763" y="78.60000000000001" width="5" height="1.1" fill="#ececec"/><path d="M770.8 73.2l1.6-1.8l1.6 1.8zM770.8 77.4l1.6 1.8l1.6-1.8z" fill="#3daee9"/><rect x="769.6" y="80" width="1.2" height="1" fill="#ececec"/><rect x="785" y="71.2" width="6.6" height="1.1" fill="#ececec"/><rect x="785" y="72.60000000000001" width="5.2" height="1.1" fill="#ececec"/><rect x="785" y="77.2" width="6.6" height="1.1" fill="#ececec"/><rect x="785" y="78.60000000000001" width="5" height="1.1" fill="#ececec"/><path d="M792.8 71.6l1.6 1.8l1.6-1.8zM792.8 79l1.6-1.8l1.6 1.8z" fill="#ececec"/><rect x="791.6" y="80" width="1.2" height="1" fill="#ececec"/></svg><div class="a" style="left:110.6px;top:71px;width:55.2px;height:16.8px;background:#1d1f23;border:1px solid #404348;box-sizing:border-box;border-radius:2px;"></div><span class="t" style="left:114.40px;top:72.09px;font-family:'Liberation Sans',sans-serif;font-size:8.4px;color:#f0f0f0;letter-spacing:-0.052px;">New (Ctrl+N)</span><div class="a" style="left:387px;top:153px;width:383px;height:292px;background:#14151a;border-radius:2px 2px 0 0;box-shadow:0 3px 22px 2px rgba(0,0,0,0.5),0 1px 4px rgba(0,0,0,0.3);"></div><div class="a" style="left:387px;top:153px;width:383px;height:18.6px;background:#111216;border-radius:2px 2px 0 0;"></div><span class="t" style="left:536.00px;top:155.59px;font-family:'Liberation Sans',sans-serif;font-size:8.4px;color:#9a9da2;letter-spacing:-0.150px;">Spelling: English (USA)</span><svg class="a" style="left:390px;top:156px" width="30" height="12" viewBox="0 0 30 12"><rect x="0.8" y="0.8" width="9.4" height="10.6" rx="1" fill="#2c2f34"/><path d="M3.6 3h3.8v5.6h-3.8z" fill="none" stroke="#8e9195" stroke-width="0.9"/><path d="M5.6 4.8h2v2.4h-2z" fill="#8e9195"/><path d="M18.5 10l2.8-2.8" stroke="#9a9da1" stroke-width="1" stroke-linecap="round"/><path d="M20.3 5.2l3.2 3.2M21.5 6.6l2-2.8l1.9 1.9l-2.8 2z" stroke="#b4b7ba" stroke-width="1.1" fill="#b4b7ba"/></svg><svg class="a" style="left:739.50px;top:159.60px;" width="9" height="6" viewBox="0 0 9 6"><path d="M0.8 1 L4.5 4.6 L8.2 1" fill="none" stroke="#cccccc" stroke-width="0.9"/></svg><svg class="a" style="left:756.30px;top:158.50px;" width="8" height="8" viewBox="0 0 8 8"><path d="M1 1L7 7M7 1L1 7" fill="none" stroke="#cccccc" stroke-width="0.9"/></svg><span class="t" style="left:392.00px;top:180.19px;font-family:'Liberation Sans',sans-serif;font-size:8.4px;color:#f0f0f0;letter-spacing:0.071px;">Text languag<u>e</u>:</span><div class="a" style="left:557px;top:178px;width:118px;height:19px;background:#2a2d32;border:1px solid #4c4f55;box-sizing:border-box;border-radius:2.5px;"></div><svg class="a" style="left:561.5px;top:183px" width="9" height="9" viewBox="0 0 9 9"><path d="M0.8 6.4l2.8-5.6l2.8 5.6M1.8 4.6h3.6" fill="none" stroke="#ececec" stroke-width="1.1"/><rect x="2" y="7.2" width="1" height="0.9" fill="#27ae60"/><rect x="3.8" y="7.2" width="1" height="0.9" fill="#27ae60"/><rect x="5.6" y="7.2" width="1" height="0.9" fill="#27ae60"/></svg><span class="t" style="left:576.00px;top:180.59px;font-family:'Liberation Sans',sans-serif;font-size:8.4px;color:#f0f0f0;letter-spacing:-0.200px;">English (USA)</span><svg class="a" style="left:663.00px;top:184.80px;" width="8" height="6" viewBox="0 0 8 6"><path d="M1 1.2 L4 4.4 L7 1.2" fill="none" stroke="#e6e6e6" stroke-width="1"/></svg><span class="t" style="left:392.00px;top:204.09px;font-family:'Liberation Sans',sans-serif;font-size:8.4px;color:#f0f0f0;letter-spacing:0.055px;"><u>N</u>ot in dictionary</span><svg class="a" style="left:646px;top:205.6px" width="9" height="10" viewBox="0 0 9 10"><path d="M0.8 1.6h7v7.6h-7z" fill="none" stroke="#ececec" stroke-width="1.1"/><rect x="2.4" y="0.4" width="3.8" height="1.6" fill="#ececec"/><path d="M2.6 7.4l3.2-3.2M3.6 4h2.4v2.4" stroke="#ececec" stroke-width="0.8" fill="none"/></svg><span class="t" style="left:662.80px;top:203.72px;font-family:'Liberation Sans',sans-serif;font-size:11.2px;color:#f4f4f4;letter-spacing:0.425px;-webkit-text-stroke:0.3px #f4f4f4;">Ω</span><div class="a" style="left:392px;top:225.4px;width:282px;height:68.6px;background:#0d0e10;"></div><span class="t" style="left:393.00px;top:224.09px;font-family:'Liberation Sans',sans-serif;font-size:8.4px;color:#050506;letter-spacing:-0.068px;">Sample</span><span class="t" style="left:423.00px;top:224.09px;font-family:'Liberation Sans',sans-serif;font-size:8.4px;color:#f00808;letter-spacing:0.118px;font-weight:bold;">Texxt.</span><div class="a" style="left:684px;top:225px;width:80px;height:20px;background:#2a2d32;border:1px solid #4c4f55;box-sizing:border-box;border-radius:2px;"></div><span class="t" style="left:700.50px;top:228.09px;font-family:'Liberation Sans',sans-serif;font-size:8.4px;color:#f0f0f0;letter-spacing:0.037px;"><u>I</u>gnore Once</span><div class="a" style="left:684px;top:250px;width:80px;height:20px;background:#2a2d32;border:1px solid #4c4f55;box-sizing:border-box;border-radius:2px;"></div><span class="t" style="left:705.50px;top:253.09px;font-family:'Liberation Sans',sans-serif;font-size:8.4px;color:#f0f0f0;letter-spacing:0.106px;">I<u>g</u>nore All</span><div class="a" style="left:684px;top:275px;width:80px;height:20px;background:#2a2d32;border:1px solid #4c4f55;box-sizing:border-box;border-radius:2px;"></div><span class="t" style="left:690.60px;top:278.09px;font-family:'Liberation Sans',sans-serif;font-size:8.4px;color:#f0f0f0;letter-spacing:0.095px;"><u>A</u>dd to Dictionary</span><span class="t" style="left:392.00px;top:298.09px;font-family:'Liberation Sans',sans-serif;font-size:8.4px;color:#f0f0f0;letter-spacing:-0.055px;"><u>S</u>uggestions</span><div class="a" style="left:392px;top:315px;width:282px;height:68.5px;background:#0d0e10;border:1px solid #3a3d42;box-sizing:border-box;"></div><div class="a" style="left:393px;top:316px;width:280px;height:13px;background:#3daee9;"></div><span class="t" style="left:394.40px;top:315.69px;font-family:'Liberation Sans',sans-serif;font-size:8.4px;color:#f0f0f0;letter-spacing:-0.090px;">Text</span><span class="t" style="left:394.40px;top:329.14px;font-family:'Liberation Sans',sans-serif;font-size:8.4px;color:#f0f0f0;letter-spacing:-0.144px;">Tex</span><span class="t" style="left:394.40px;top:342.59px;font-family:'Liberation Sans',sans-serif;font-size:8.4px;color:#f0f0f0;letter-spacing:-0.412px;">TeX</span><span class="t" style="left:394.40px;top:356.04px;font-family:'Liberation Sans',sans-serif;font-size:8.4px;color:#f0f0f0;letter-spacing:-0.092px;">Extent</span><span class="t" style="left:394.40px;top:369.49px;font-family:'Liberation Sans',sans-serif;font-size:8.4px;color:#f0f0f0;letter-spacing:-0.303px;">Ext</span><div class="a" style="left:684px;top:315px;width:80px;height:20px;background:#2a2d32;border:1px solid #4c4f55;box-sizing:border-box;border-radius:2px;"></div><span class="t" style="left:709.50px;top:318.09px;font-family:'Liberation Sans',sans-serif;font-size:8.4px;color:#f0f0f0;letter-spacing:0.145px;">Co<u>r</u>rect</span><div class="a" style="left:684px;top:339px;width:80px;height:20px;background:#2a2d32;border:1px solid #4c4f55;box-sizing:border-box;border-radius:2px;"></div><span class="t" style="left:704.00px;top:342.09px;font-family:'Liberation Sans',sans-serif;font-size:8.4px;color:#f0f0f0;letter-spacing:0.077px;">Correct A<u>l</u>l</span><div class="a" style="left:684px;top:362px;width:80px;height:20px;background:#2a2d32;border:1px solid #4c4f55;box-sizing:border-box;border-radius:2px;"></div><span class="t" style="left:696.00px;top:365.09px;font-family:'Liberation Sans',sans-serif;font-size:8.4px;color:#f0f0f0;letter-spacing:-0.023px;">Alwa<u>y</u>s Correct</span><div class="a" style="left:393px;top:391px;width:11px;height:11px;border:1px solid #3daee9;box-sizing:border-box;border-radius:2px;"></div><div class="a" style="left:395px;top:393px;width:7px;height:7px;background:#3daee9;border-radius:1px;"></div><span class="t" style="left:410.60px;top:388.99px;font-family:'Liberation Sans',sans-serif;font-size:8.4px;color:#f0f0f0;letter-spacing:0.031px;">Chec<u>k</u> grammar</span><div class="a" style="left:396px;top:416.6px;width:56px;height:19.8px;background:#2a2d32;border:1px solid #4c4f55;box-sizing:border-box;border-radius:2px;"></div><span class="t" style="left:415.00px;top:419.89px;font-family:'Liberation Sans',sans-serif;font-size:8.4px;color:#f0f0f0;letter-spacing:0.062px;"><u>H</u>elp</span><div class="a" style="left:582px;top:416.6px;width:56px;height:19.8px;background:#2a2d32;border:1px solid #4c4f55;box-sizing:border-box;border-radius:2px;"></div><span class="t" style="left:592.50px;top:419.89px;font-family:'Liberation Sans',sans-serif;font-size:8.4px;color:#f0f0f0;letter-spacing:-0.086px;"><u>O</u>ptions...</span><div class="a" style="left:643px;top:416.6px;width:56.5px;height:19.8px;background:#2a2d32;border:1px solid #4c4f55;box-sizing:border-box;border-radius:2px;"></div><span class="t" style="left:661.00px;top:419.89px;font-family:'Liberation Sans',sans-serif;font-size:8.4px;color:#6a6d72;letter-spacing:-0.012px;"><u>U</u>ndo</span><div class="a" style="left:704px;top:416.6px;width:56px;height:19.8px;background:#2a2d32;border:1px solid #4c4f55;box-sizing:border-box;border-radius:2px;"></div><span class="t" style="left:722.00px;top:419.89px;font-family:'Liberation Sans',sans-serif;font-size:8.4px;color:#f0f0f0;letter-spacing:-0.287px;"><u>C</u>lose</span>
</div>
</body></html>
